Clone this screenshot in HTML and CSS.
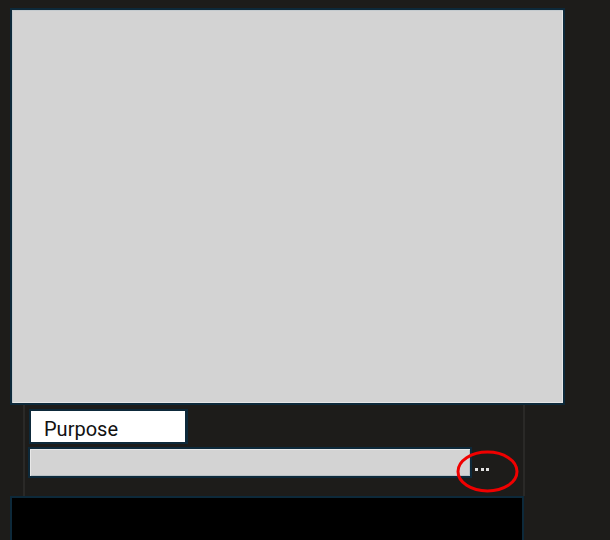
FILE: index.html
```html
<!DOCTYPE html>
<html>
<head>
<meta charset="utf-8">
<link rel="stylesheet" href="styles.css">
</head>
<body>
<div class="page">
  <div class="preview"></div>
  <div class="panel">
    <div class="label">Purpose</div>
    <div class="field-row">
      <div class="field"></div>
      <div class="dots"><span></span><span></span><span></span></div>
    </div>
    <svg class="mark" width="64" height="44" viewBox="0 0 64 44">
      <ellipse cx="31.5" cy="21.5" rx="29.5" ry="19.5" fill="none" stroke="#f00000" stroke-width="3"/>
    </svg>
  </div>
  <div class="console"></div>
</div>
</body>
</html>
```
FILE: styles.css
```css
html, body {
  margin: 0;
  padding: 0;
  background: #1d1c1a;
  height: 100%;
  overflow: hidden;
}
.page {
  display: flex;
  flex-direction: column;
  font-family: Roboto, "Liberation Sans", sans-serif;
}
.preview {
  margin: 8px 0 0 10px;
  width: 555px;
  height: 397px;
  box-sizing: border-box;
  border: 2px solid #0d293a;
  background: #d3d3d3;
  box-shadow: inset 1px 1px 0 #c3cace, inset -1px -1px 0 #e6e6e6;
}
.panel {
  position: relative;
  margin-left: 23px;
  width: 502px;
  height: 91px;
  box-sizing: border-box;
  border-left: 2px solid #2a2927;
  border-right: 2px solid #2a2927;
  padding: 4px 0 0 3px;
  display: flex;
  flex-direction: column;
  align-items: flex-start;
}
.label {
  margin-left: 1px;
  width: 141px;
  height: 25px;
  padding: 6px 0 0 13px;
  box-sizing: content-box;
  background: #ffffff;
  border: 2px solid #0d293a;
  border-right-width: 3px;
  color: #111;
  font-size: 20px;
  line-height: 25px;
}
.field-row {
  margin-top: 3px;
  display: flex;
  align-items: flex-end;
}
.field {
  width: 444px;
  height: 31px;
  box-sizing: border-box;
  border: 2px solid #0d293a;
  background: #d3d3d3;
  box-shadow: inset 1px 1px 0 #e8e8e8, inset -1px -1px 0 #b9c0c4;
}
.dots {
  display: flex;
  gap: 2.5px;
  margin: 0 0 7px 3px;
}
.dots span {
  width: 3px;
  height: 3px;
  background: #e2e2e2;
}
.mark {
  position: absolute;
  left: 431px;
  top: 45px;
}
.console {
  margin-left: 10px;
  width: 514px;
  height: 60px;
  box-sizing: border-box;
  border: 2px solid #0d293a;
  border-bottom: none;
  background: #000;
}
```
